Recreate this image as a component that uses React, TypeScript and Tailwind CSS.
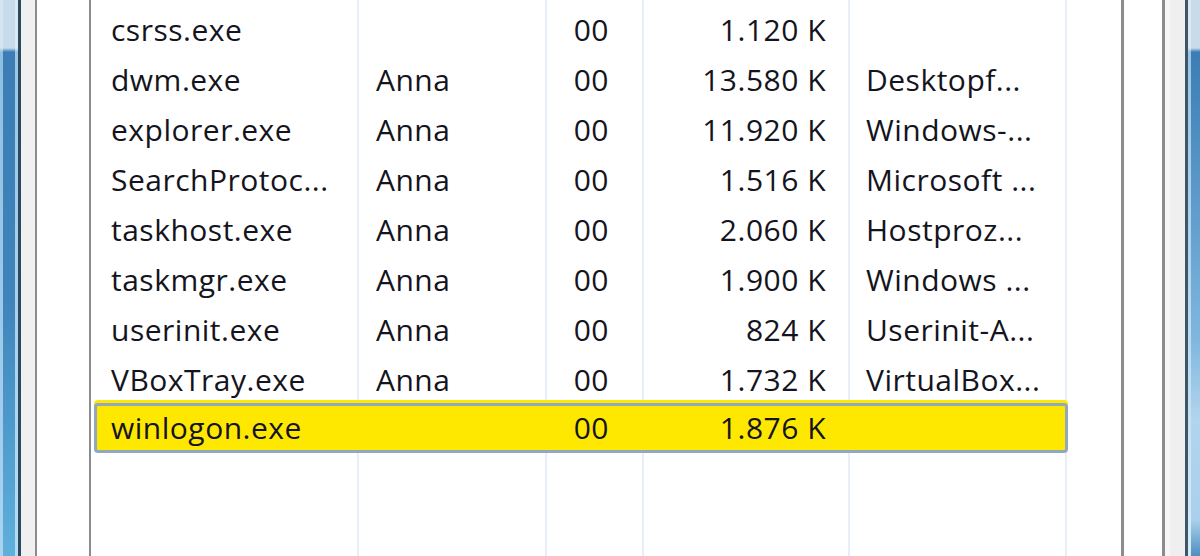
import React from "react";

type Row = { name: string; user: string; cpu: string; mem: string; desc: string };

const rows: Row[] = [
  { name: "csrss.exe", user: "", cpu: "00", mem: "1.120 K", desc: "" },
  { name: "dwm.exe", user: "Anna", cpu: "00", mem: "13.580 K", desc: "Desktopf..." },
  { name: "explorer.exe", user: "Anna", cpu: "00", mem: "11.920 K", desc: "Windows-..." },
  { name: "SearchProtoc...", user: "Anna", cpu: "00", mem: "1.516 K", desc: "Microsoft ..." },
  { name: "taskhost.exe", user: "Anna", cpu: "00", mem: "2.060 K", desc: "Hostproz..." },
  { name: "taskmgr.exe", user: "Anna", cpu: "00", mem: "1.900 K", desc: "Windows ..." },
  { name: "userinit.exe", user: "Anna", cpu: "00", mem: "824 K", desc: "Userinit-A..." },
  { name: "VBoxTray.exe", user: "Anna", cpu: "00", mem: "1.732 K", desc: "VirtualBox..." },
];

const line = "border-r-2 border-[#e7eef7]";

function Cells({ r, className }: { r?: Row; className: string }) {
  return (
    <div className={`grid grid-cols-[268px_188px_97px_206px_217px_1fr] ${className}`}>
      <div className={`${line} pl-[20px] flex items-center whitespace-nowrap`}>{r?.name}</div>
      <div className={`${line} pl-[17px] flex items-center whitespace-nowrap`}>{r?.user}</div>
      <div className={`${line} pr-[33px] flex items-center justify-end whitespace-nowrap`}>{r?.cpu}</div>
      <div className={`${line} pr-[22px] flex items-center justify-end whitespace-nowrap`}>{r?.mem}</div>
      <div className={`${line} pl-[16px] flex items-center whitespace-nowrap`}>{r?.desc}</div>
      <div />
    </div>
  );
}

export default function App() {
  return (
    <div
      className="flex h-[556px] w-[1200px] overflow-hidden bg-white text-[#141420]"
      style={{ fontFamily: '"Open Sans", "Noto Sans", sans-serif' }}
    >
      {/* left window edge */}
      <div className="flex w-[18px] bg-[linear-gradient(to_bottom,#c8dbeb_0px,#c8dbeb_48px,#3b7db4_52px,#3f84bb_300px,#5eb0dd_556px)]">
        <div className="w-[3px] bg-[linear-gradient(to_bottom,#d6e4f0_0px,#d6e4f0_48px,#8fbfe0_52px,#a9d3ee_556px)]" />
        <div className="flex-1" />
        <div className="w-[3px] bg-[linear-gradient(to_bottom,#dce8f2_0px,#dce8f2_48px,#9ac6e6_52px,#b6dcf2_556px)]" />
      </div>
      <div className="w-[3px] bg-[#2c4a5f]" />
      <div className="w-[14px] bg-[#f0f0f0]" />
      <div className="w-[2px] bg-[#8a8c8e]" />
      <div className="w-[52px] bg-white" />
      <div className="w-[2px] bg-[#8a8c8e]" />

      {/* process list */}
      <div className="flex w-[1030px] flex-col text-[30px] leading-none tracking-[0.5px]">
        <Cells className="h-[5px]" />
        {rows.map((r) => (
          <Cells key={r.name} r={r} className="h-[50px]" />
        ))}
        <div className="flex h-[50px] -mt-[2px]">
          <div className="ml-[3px] grid w-[974px] grid-cols-[262px_188px_97px_206px_215px] rounded-[4px] border-[3px] border-[#91a9c0] bg-[#ffe800] shadow-[0_-3px_0_0_#ffe800]">
            <div className="pl-[14px] flex items-center whitespace-nowrap">winlogon.exe</div>
            <div />
            <div className="pr-[35px] flex items-center justify-end">00</div>
            <div className="pr-[24px] flex items-center justify-end whitespace-nowrap">1.876 K</div>
            <div />
          </div>
        </div>
        <Cells className="flex-1" />
      </div>

      {/* right side */}
      <div className="w-[3px] bg-[#8a8c8e]" />
      <div className="w-[38px] bg-white" />
      <div className="w-[3px] bg-[#8a8c8e]" />
      <div className="w-[5px] bg-[#f6f6f6]" />
      <div className="w-[15px] bg-[#efefef]" />
      <div className="w-[3px] bg-[#3f5667]" />
      <div className="flex flex-1 bg-[linear-gradient(to_bottom,#c8dbeb_0px,#c8dbeb_48px,#3b7db4_52px,#7fb7df_340px,#b2d5ee_420px,#a9d0ec_520px,#4f8fc1_556px)]">
        <div className="w-[3px] bg-[linear-gradient(to_bottom,#dce8f2_0px,#dce8f2_48px,#9ac6e6_52px,#d6ecf8_556px)]" />
        <div className="flex-1" />
      </div>
    </div>
  );
}
